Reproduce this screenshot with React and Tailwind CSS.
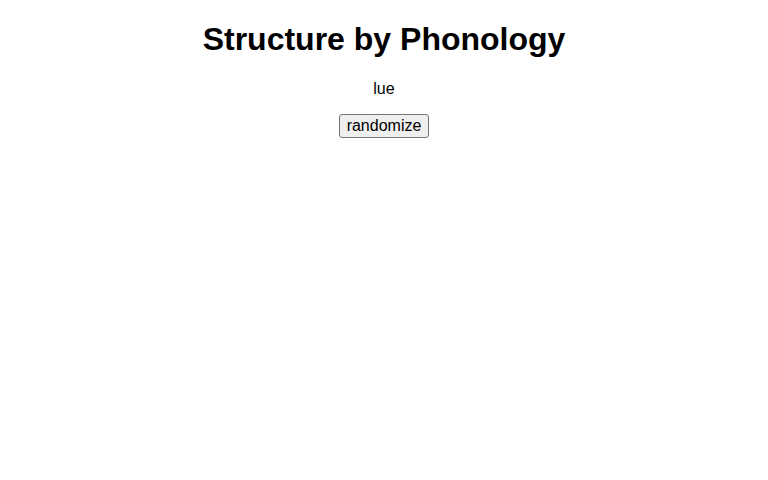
import React, { useState } from "react";

const words = ["lue", "ka", "tomi", "sen", "paru"];

export default function App() {
    const [word, setWord] = useState(words[0]);
    return (
        <div className="text-center text-black bg-white min-h-[480px]" style={{ fontFamily: '"Liberation Sans", Arial, sans-serif' }}>
            <h1 className="text-[32px] leading-[37px] font-bold pt-[21px] mb-[22px]">Structure by Phonology</h1>
            <p className="text-base leading-[18px] mb-4">{word}</p>
            <button
                onClick={() => setWord(words[Math.floor(Math.random() * words.length)])}
                className="text-base leading-[18px] px-[7px] py-[2px] bg-[#efefef] border border-[#767676] rounded-[3px] hover:bg-[#e5e5e5]"
            >
                randomize
            </button>
        </div>
    );
}
